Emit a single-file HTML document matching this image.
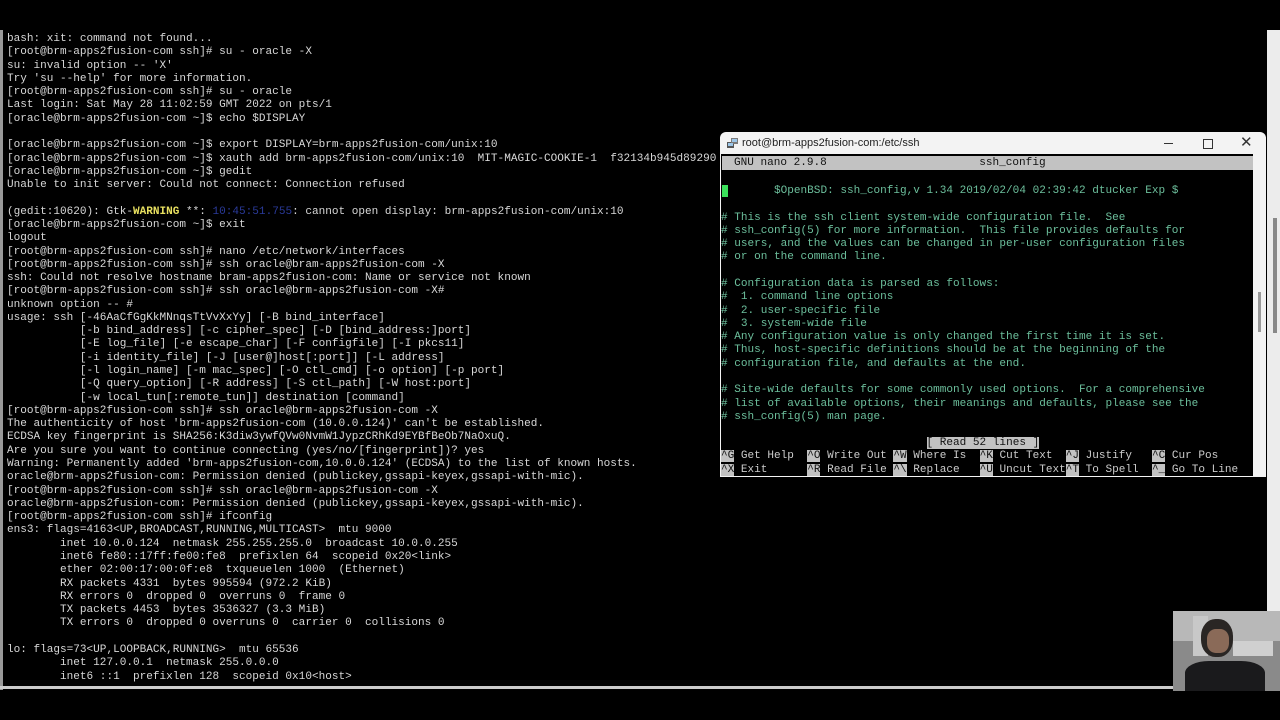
<!DOCTYPE html>
<html><head><meta charset="utf-8"><style>
html,body{margin:0;padding:0;background:#000;width:1280px;height:720px;overflow:hidden;position:relative}
pre{margin:0;font-family:"Liberation Mono",monospace;font-size:11.05px;line-height:13.28px;white-space:pre}
#term{position:absolute;left:7px;top:33px;color:#d8d8d8}
.strip{position:absolute;background:#d0d0d0}
#win{position:absolute;left:720px;top:132px;width:546px;height:345px;background:#f3f3f3;border-radius:6px 6px 0 0;z-index:2}
#title{position:absolute;left:22px;top:5px;font:11px "Liberation Sans",sans-serif;color:#222}
#nano{position:absolute;left:1px;top:22px;width:532px;height:322px;background:#000}
#nano pre{position:absolute;left:0;color:#6cbf9c}
.hl{background:#c2c2c2;color:#111}
.k{background:#c2c2c2;color:#111}
</style></head><body>
<div class="strip" style="left:0;top:30px;width:3px;height:660px;background:#999"></div>
<div class="strip" style="left:0;top:686px;width:1173px;height:3px;background:#ccc"></div>
<div class="strip" style="left:1267px;top:30px;width:13px;height:582px;background:#ececec"></div>
<div class="strip" style="left:1273px;top:218px;width:4px;height:115px;background:#888"></div>
<pre id="term">bash: xit: command not found...
[root@brm-apps2fusion-com ssh]# su - oracle -X
su: invalid option -- 'X'
Try 'su --help' for more information.
[root@brm-apps2fusion-com ssh]# su - oracle
Last login: Sat May 28 11:02:59 GMT 2022 on pts/1
[oracle@brm-apps2fusion-com ~]$ echo $DISPLAY

[oracle@brm-apps2fusion-com ~]$ export DISPLAY=brm-apps2fusion-com/unix:10
[oracle@brm-apps2fusion-com ~]$ xauth add brm-apps2fusion-com/unix:10  MIT-MAGIC-COOKIE-1  f32134b945d89290
[oracle@brm-apps2fusion-com ~]$ gedit
Unable to init server: Could not connect: Connection refused

(gedit:10620): Gtk-<b style="color:#e8e060">WARNING</b> **: <span style="color:#2a3a9a">10:45:51.755</span>: cannot open display: brm-apps2fusion-com/unix:10
[oracle@brm-apps2fusion-com ~]$ exit
logout
[root@brm-apps2fusion-com ssh]# nano /etc/network/interfaces
[root@brm-apps2fusion-com ssh]# ssh oracle@bram-apps2fusion-com -X
ssh: Could not resolve hostname bram-apps2fusion-com: Name or service not known
[root@brm-apps2fusion-com ssh]# ssh oracle@brm-apps2fusion-com -X#
unknown option -- #
usage: ssh [-46AaCfGgKkMNnqsTtVvXxYy] [-B bind_interface]
           [-b bind_address] [-c cipher_spec] [-D [bind_address:]port]
           [-E log_file] [-e escape_char] [-F configfile] [-I pkcs11]
           [-i identity_file] [-J [user@]host[:port]] [-L address]
           [-l login_name] [-m mac_spec] [-O ctl_cmd] [-o option] [-p port]
           [-Q query_option] [-R address] [-S ctl_path] [-W host:port]
           [-w local_tun[:remote_tun]] destination [command]
[root@brm-apps2fusion-com ssh]# ssh oracle@brm-apps2fusion-com -X
The authenticity of host 'brm-apps2fusion-com (10.0.0.124)' can't be established.
ECDSA key fingerprint is SHA256:K3diw3ywfQVw0NvmW1JypzCRhKd9EYBfBeOb7NaOxuQ.
Are you sure you want to continue connecting (yes/no/[fingerprint])? yes
Warning: Permanently added 'brm-apps2fusion-com,10.0.0.124' (ECDSA) to the list of known hosts.
oracle@brm-apps2fusion-com: Permission denied (publickey,gssapi-keyex,gssapi-with-mic).
[root@brm-apps2fusion-com ssh]# ssh oracle@brm-apps2fusion-com -X
oracle@brm-apps2fusion-com: Permission denied (publickey,gssapi-keyex,gssapi-with-mic).
[root@brm-apps2fusion-com ssh]# ifconfig
ens3: flags=4163&lt;UP,BROADCAST,RUNNING,MULTICAST&gt;  mtu 9000
        inet 10.0.0.124  netmask 255.255.255.0  broadcast 10.0.0.255
        inet6 fe80::17ff:fe00:fe8  prefixlen 64  scopeid 0x20&lt;link&gt;
        ether 02:00:17:00:0f:e8  txqueuelen 1000  (Ethernet)
        RX packets 4331  bytes 995594 (972.2 KiB)
        RX errors 0  dropped 0  overruns 0  frame 0
        TX packets 4453  bytes 3536327 (3.3 MiB)
        TX errors 0  dropped 0 overruns 0  carrier 0  collisions 0

lo: flags=73&lt;UP,LOOPBACK,RUNNING&gt;  mtu 65536
        inet 127.0.0.1  netmask 255.0.0.0
        inet6 ::1  prefixlen 128  scopeid 0x10&lt;host&gt;</pre>

<div id="win">
  <svg style="position:absolute;left:6px;top:5px" width="13" height="13" viewBox="0 0 13 13"><rect x="1" y="5" width="7" height="6" fill="#555"/><rect x="5" y="1" width="7" height="6" fill="#7a7a7a"/><rect x="6" y="2" width="5" height="3" fill="#9cc6e8"/><rect x="2" y="6" width="5" height="3" fill="#9cc6e8"/></svg>
  <div id="title">root@brm-apps2fusion-com:/etc/ssh</div>
  <div style="position:absolute;left:444px;top:11px;width:9px;height:1px;background:#333"></div>
  <div style="position:absolute;left:483px;top:7px;width:8px;height:8px;border:1px solid #333"></div>
  <div style="position:absolute;left:520px;top:1px;font:15px 'Liberation Sans',sans-serif;color:#333">✕</div>
  <div style="position:absolute;left:538px;top:160px;width:3px;height:40px;background:#999"></div>
  <div id="nano">
    <div style="position:absolute;left:1px;top:2px;width:531px;height:14px;background:#c2c2c2"></div>
    <pre style="top:3px;left:13px;color:#111">GNU nano 2.9.8                       ssh_config</pre>
    <div style="position:absolute;left:1px;top:31px;width:6px;height:12px;background:#3be05a"></div>
<pre style="top:31px">        $OpenBSD: ssh_config,v 1.34 2019/02/04 02:39:42 dtucker Exp $

# This is the ssh client system-wide configuration file.  See
# ssh_config(5) for more information.  This file provides defaults for
# users, and the values can be changed in per-user configuration files
# or on the command line.

# Configuration data is parsed as follows:
#  1. command line options
#  2. user-specific file
#  3. system-wide file
# Any configuration value is only changed the first time it is set.
# Thus, host-specific definitions should be at the beginning of the
# configuration file, and defaults at the end.

# Site-wide defaults for some commonly used options.  For a comprehensive
# list of available options, their meanings and defaults, please see the
# ssh_config(5) man page.</pre>
<pre style="top:283px;color:#ccc">                               <span class="hl">[ Read 52 lines ]</span>
<span class="k">^G</span> Get Help  <span class="k">^O</span> Write Out <span class="k">^W</span> Where Is  <span class="k">^K</span> Cut Text  <span class="k">^J</span> Justify   <span class="k">^C</span> Cur Pos
<span class="k">^X</span> Exit      <span class="k">^R</span> Read File <span class="k">^\</span> Replace   <span class="k">^U</span> Uncut Text<span class="k">^T</span> To Spell  <span class="k">^_</span> Go To Line</pre>
  </div>
</div>

<div style="position:absolute;left:1173px;top:611px;width:107px;height:80px;background:#8a8a8a;overflow:hidden">
  <div style="position:absolute;left:0;top:0;width:107px;height:30px;background:#b8b8b8"></div>
  <div style="position:absolute;left:20px;top:5px;width:15px;height:40px;background:#c8c8c8"></div>
  <div style="position:absolute;left:60px;top:30px;width:40px;height:15px;background:#d0d0d0"></div>
  <div style="position:absolute;left:28px;top:8px;width:32px;height:38px;border-radius:45%;background:#2a2624"></div>
  <div style="position:absolute;left:34px;top:18px;width:22px;height:24px;border-radius:40%;background:#8a6a58"></div>
  <div style="position:absolute;left:12px;top:50px;width:80px;height:40px;border-radius:30% 30% 0 0;background:#1a1a1c"></div>
</div>
</body></html>
